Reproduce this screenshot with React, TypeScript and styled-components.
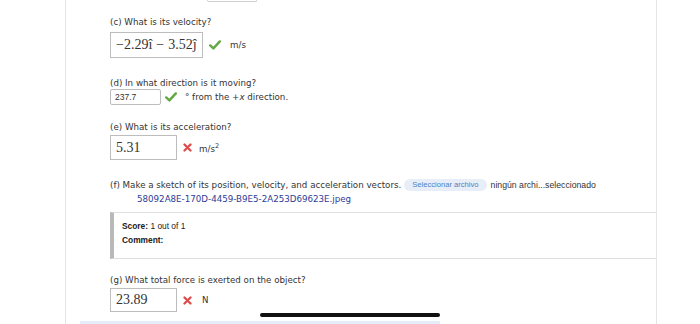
import React from "react";
import styled, { createGlobalStyle } from "styled-components";

const GlobalStyle = createGlobalStyle`
  html, body {
    margin: 0;
    padding: 0;
    background: #ffffff;
  }
  body {
    width: 700px;
    height: 324px;
    overflow: hidden;
    font-family: "DejaVu Sans", Verdana, sans-serif;
    color: #333333;
  }
`;

const Page = styled.div`
  position: relative;
  width: 700px;
  height: 324px;
  overflow: hidden;
`;

const Panel = styled.div`
  margin-left: 65px;
  width: 590px;
  height: 324px;
  border-left: 1px solid #e4e4e4;
  border-right: 1px solid #e4e4e4;
  box-sizing: content-box;
`;

const Content = styled.div`
  padding-left: 44px;
`;

const PrevInput = styled.div`
  margin-left: 97px;
  width: 48px;
  height: 1px;
  border: 1px solid #cfcfcf;
  border-top: none;
  border-radius: 0 0 2px 2px;
`;

const Question = styled.div<{ $top: number }>`
  margin-top: ${(p) => p.$top}px;
  font-size: 8.7px;
  line-height: 10px;
  height: 10px;
  white-space: nowrap;
  display: flex;
  align-items: center;
`;

const AnswerRow = styled.div<{ $top: number }>`
  margin-top: ${(p) => p.$top}px;
  display: flex;
  align-items: center;
`;

const MathBox = styled.div<{ $w: number; $h: number }>`
  width: ${(p) => p.$w}px;
  height: ${(p) => p.$h}px;
  box-sizing: border-box;
  border: 1px solid #bdbdbd;
  display: flex;
  align-items: center;
  padding-left: 5px;
  font-family: "Liberation Serif", "Times New Roman", serif;
  font-size: 14px;
  color: #333;
  white-space: nowrap;
`;

const SmallInput = styled.div`
  width: 51px;
  height: 16px;
  box-sizing: border-box;
  border: 1px solid #bdbdbd;
  border-radius: 2px;
  display: flex;
  align-items: center;
  padding-left: 4px;
  font-family: "Liberation Sans", Arial, sans-serif;
  font-size: 8.5px;
  color: #333;
`;

const Mark = styled.span<{ $gap: number }>`
  display: inline-flex;
  margin-left: ${(p) => p.$gap}px;
`;

const Unit = styled.span<{ $gap: number }>`
  margin-left: ${(p) => p.$gap}px;
  font-size: 8.7px;
  white-space: nowrap;
  sup {
    font-size: 6.5px;
    vertical-align: 4px;
  }
`;

const Minus = styled.span`
  margin: 0 4px;
`;

const FilePill = styled.span`
  display: inline-flex;
  align-items: center;
  height: 12px;
  margin-left: 3px;
  padding: 0 8px;
  border-radius: 6px;
  background: #e7eef8;
  color: #4d7fc4;
  font-family: "Liberation Sans", Arial, sans-serif;
  font-size: 7.6px;
`;

const NoFile = styled.span`
  margin-left: 4px;
  font-family: "Liberation Sans", Arial, sans-serif;
  font-size: 8.7px;
  color: #333;
`;

const FileLink = styled.div`
  margin-top: 4px;
  margin-left: 27px;
  font-size: 8.7px;
  line-height: 10px;
  color: #2e3c96;
`;

const ScoreBox = styled.div`
  margin-top: 8px;
  height: 47px;
  box-sizing: border-box;
  border-top: 1px solid #e0e0e0;
  border-bottom: 1px solid #e0e0e0;
  border-left: 4px solid #b9b9b9;
  padding: 6px 0 0 8px;
  font-family: "Liberation Sans", Arial, sans-serif;
  font-size: 8.4px;
  line-height: 14px;
  color: #222;
  b {
    font-weight: bold;
  }
`;

const HomeBar = styled.div`
  position: absolute;
  left: 260px;
  top: 313px;
  width: 180px;
  height: 4px;
  border-radius: 2px;
  background: #111;
`;

const BlueStrip = styled.div`
  position: absolute;
  left: 80px;
  top: 321px;
  width: 360px;
  height: 3px;
  background: #e5edf8;
`;

const Check = () => (
  <svg width="12" height="10" viewBox="0 0 12 10">
    <path d="M1.2 5.4 L4.4 8.4 L10.8 1.4" fill="none" stroke="#63a845" strokeWidth="2.4" strokeLinecap="round" strokeLinejoin="round" />
  </svg>
);

const Cross = () => (
  <svg width="9" height="9" viewBox="0 0 9 9">
    <path d="M1.5 1.5 L7.5 7.5 M7.5 1.5 L1.5 7.5" stroke="#dd4c4c" strokeWidth="2.3" strokeLinecap="round" />
  </svg>
);

export default function App() {
  return (
    <Page>
      <GlobalStyle />
      <Panel>
        <Content>
          <PrevInput />
          <Question $top={15}>(c) What is its velocity?</Question>
          <AnswerRow $top={5}>
            <MathBox $w={93} $h={26}>
              −2.29î
              <Minus>−</Minus>3.52ĵ
            </MathBox>
            <Mark $gap={6}>
              <Check />
            </Mark>
            <Unit $gap={9}>m/s</Unit>
          </AnswerRow>
          <Question $top={20}>(d) In what direction is it moving?</Question>
          <AnswerRow $top={1}>
            <SmallInput>237.7</SmallInput>
            <Mark $gap={4}>
              <Check />
            </Mark>
            <Unit $gap={8}>° from the +<i>x</i> direction.</Unit>
          </AnswerRow>
          <Question $top={17}>(e) What is its acceleration?</Question>
          <AnswerRow $top={3}>
            <MathBox $w={67} $h={25}>5.31</MathBox>
            <Mark $gap={6}>
              <Cross />
            </Mark>
            <Unit $gap={7}>
              m/s<sup>2</sup>
            </Unit>
          </AnswerRow>
          <Question $top={20}>
            (f) Make a sketch of its position, velocity, and acceleration vectors.
            <FilePill>Seleccionar archivo</FilePill>
            <NoFile>ningún archi...seleccionado</NoFile>
          </Question>
          <FileLink>58092A8E-170D-4459-B9E5-2A253D69623E.jpeg</FileLink>
          <ScoreBox>
            <div>
              <b>Score:</b> 1 out of 1
            </div>
            <div>
              <b>Comment:</b>
            </div>
          </ScoreBox>
          <Question $top={16}>(g) What total force is exerted on the object?</Question>
          <AnswerRow $top={3}>
            <MathBox $w={67} $h={24}>23.89</MathBox>
            <Mark $gap={6}>
              <Cross />
            </Mark>
            <Unit $gap={10}>N</Unit>
          </AnswerRow>
        </Content>
      </Panel>
      <HomeBar />
      <BlueStrip />
    </Page>
  );
}
